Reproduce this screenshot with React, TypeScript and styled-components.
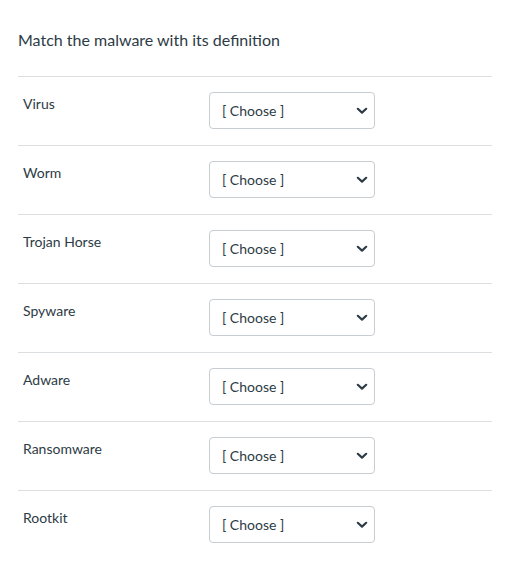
import React from "react";
import styled, { createGlobalStyle } from "styled-components";

const Global = createGlobalStyle`
  html, body { margin: 0; padding: 0; background: #ffffff; }
  body { font-family: Lato, "Open Sans", sans-serif; color: #2d3b45; }
`;

const Page = styled.div`
  padding: 28px 15px 0 18px;
  width: 474px;
`;

const Title = styled.h2`
  margin: 0 0 24px 0;
  font-size: 16px;
  font-weight: 400;
  line-height: 24px;
  color: #2d3b45;
`;

const List = styled.div`
  display: flex;
  flex-direction: column;
`;

const Row = styled.div`
  display: grid;
  grid-template-columns: 186px 166px;
  align-items: start;
  border-top: 1px solid #dcdfe2;
  padding: 15px 0 16px 5px;
  height: 37px;
`;

const Label = styled.div`
  font-size: 14px;
  line-height: 20px;
  padding-top: 2px;
  color: #2d3b45;
`;

const SelectBox = styled.div`
  box-sizing: border-box;
  height: 37px;
  border: 1px solid #c7cdd1;
  border-radius: 4px;
  display: flex;
  align-items: center;
  justify-content: space-between;
  padding: 0 6px 0 12px;
  font-size: 14px;
  color: #2d3b45;
  background: #fff;
`;

const Chevron = () => (
  <svg width="12" height="8" viewBox="0 0 12 8" aria-hidden="true">
    <polyline
      points="1.8,1.8 6,5.6 10.2,1.8"
      fill="none"
      stroke="#2d3b45"
      strokeWidth="2.2"
      strokeLinecap="round"
      strokeLinejoin="round"
    />
  </svg>
);

const items = ["Virus", "Worm", "Trojan Horse", "Spyware", "Adware", "Ransomware", "Rootkit"];

export default function App() {
  return (
    <Page>
      <Global />
      <Title>Match the malware with its definition</Title>
      <List>
        {items.map((it) => (
          <Row key={it}>
            <Label>{it}</Label>
            <SelectBox>
              <span>[ Choose ]</span>
              <Chevron />
            </SelectBox>
          </Row>
        ))}
      </List>
    </Page>
  );
}
